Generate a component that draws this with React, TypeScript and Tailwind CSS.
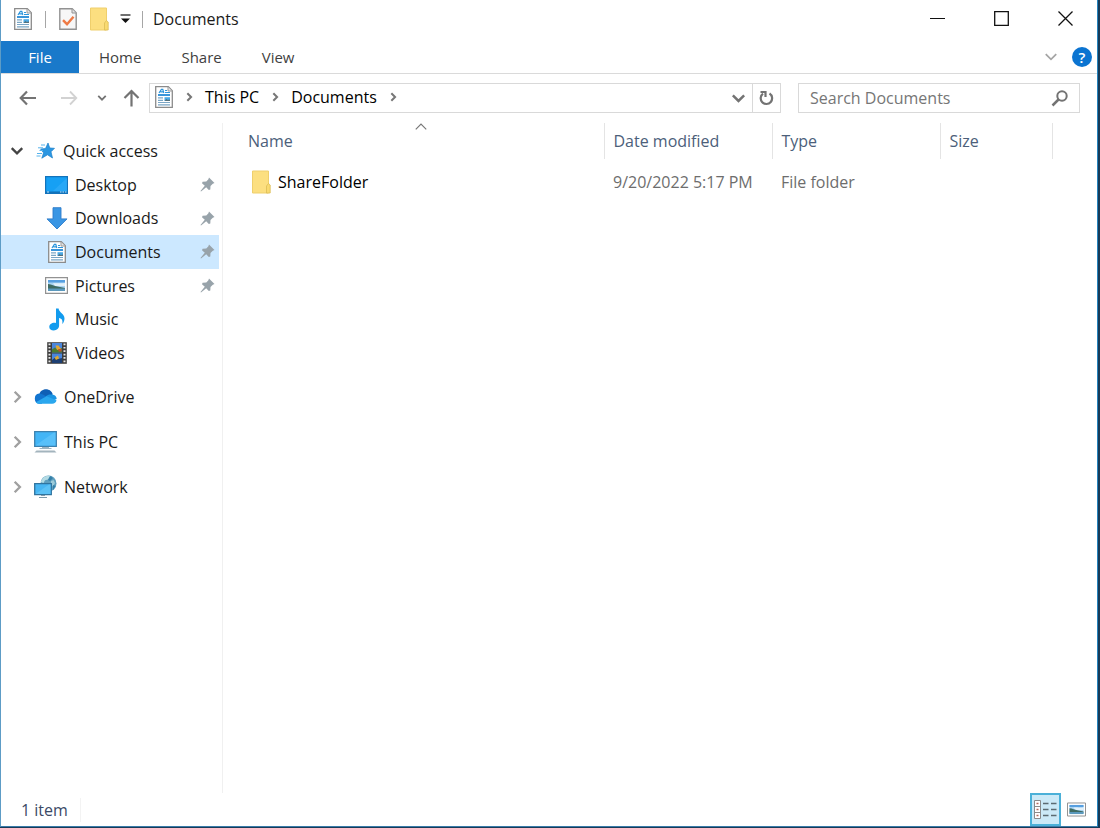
import type { ReactNode } from "react"

function DocumentIcon() {
  return (
    <svg width="18" height="22" viewBox="0 0 18 22" aria-hidden="true">
      <path d="M.7.7h12.6l4 4v16.6H.7z" fill="#fff" stroke="#8b8b8b" strokeWidth="1.3" />
      <path d="M13 1v4h4" fill="#e8e8e8" stroke="#9a9a9a" />
      <path d="M4 7 6.4 3.4h1.4L8.8 7M5.4 5.8h3.2M10 4.5h2M10 6.5h5" fill="none" stroke="#2c95dc" strokeWidth="1.2" />
      <path d="M3 9h12" stroke="#1682d4" strokeWidth="1.7" />
      <path d="M3 11.8h5M3 14.3h5M3 16.5h12M3 18.8h12" stroke="#7aa6c6" strokeWidth="1.2" />
      <path d="M9.5 11.2H15V15H9.5z" fill="#4aa9e4" />
      <path d="m9.5 15 2-2 1.3 1 2.2-.6V15z" fill="#55707b" />
    </svg>
  )
}

function CheckDocIcon() {
  return (
    <svg width="18" height="22" viewBox="0 0 18 22" aria-hidden="true">
      <path d="M.8.8h12.4l4 4v16.4H.8z" fill="#f7f7f7" stroke="#929292" strokeWidth="1.4" />
      <path d="M13 1v4h4" fill="#e4e4e4" stroke="#929292" />
      <path d="m4 12.2 4 4 6.5-7.5" fill="none" stroke="#ee7a45" strokeWidth="2.4" />
    </svg>
  )
}

function FolderIcon() {
  return (
    <svg width="19" height="24" viewBox="0 0 19 24" aria-hidden="true">
      <path d="M.5 1h16v22H.5z" fill="#fcdf80" stroke="#efcf6c" />
      <path d="M14.5 23v-7l2-2.5 1.7 1.5v8z" fill="#f9da70" stroke="#dcbc55" strokeWidth=".8" />
    </svg>
  )
}

function StarIcon() {
  return (
    <svg width="20" height="18" viewBox="0 0 20 18" aria-hidden="true">
      <path d="m12 1 1.8 5 4.700.3-3.500 3.500 1.500 6.200-5-3.200L5.800 16.200l1.800-5.400-3-3.700 4.900-.6z" fill="#2b97e2" stroke="#1c7fc8" strokeWidth=".7" />
      <path d="M5 3h4M2 5.800h5M3.500 8.500H7M1 11.500h5M.5 14h4" stroke="#56b3ec" />
    </svg>
  )
}

function DesktopIcon() {
  return (
    <svg width="23" height="18" viewBox="0 0 23 18" aria-hidden="true">
      <path d="M.6.6h21.800v16.800H.6z" fill="#16a0f4" stroke="#1373bb" strokeWidth="1.2" />
      <path d="M8 15 22 2v13z" fill="#35aef8" opacity=".6" />
      <path d="M1 15.500h21V17H1z" fill="#1272b9" />
      <path d="M2 16h2M15 16h1.500M17.500 16H19M20 16h1.500" stroke="#bfe4fb" strokeWidth="1.2" />
    </svg>
  )
}

function DownloadIcon() {
  return (
    <svg width="22" height="23" viewBox="0 0 22 23" aria-hidden="true">
      <path d="M7 .7h8v11.200h6L11 22 1 11.900h6z" fill="#3a96e4" stroke="#2c7ccb" strokeWidth=".9" />
    </svg>
  )
}

// landscape thumbnail, shared by the sidebar and the large icons toggle
function PictureIcon({ className = "h-[17px] w-[23px]" }: { className?: string }) {
  return (
    <svg className={className} viewBox="0 0 23 17" aria-hidden="true">
      <path d="M.6.6h21.800v15.800H.6z" fill="#fff" stroke="#929292" strokeWidth="1.2" />
      <path d="M3 3h17v11H3z" fill="#a9d3f2" />
      <path d="M3 3h17v2.500H3z" fill="#579fe0" />
      <path d="M8 6.500c3-1 5 .5 12-.5v3H10z" fill="#e3f1fa" />
      <path d="M3 7c4 .2 6 2 9.500 2.500L20 11v1H3z" fill="#3f6b62" />
      <path d="M3 11.500h17V14H3z" fill="#5b99bd" />
    </svg>
  )
}

function MusicIcon() {
  return (
    <svg width="16" height="23" viewBox="0 0 16 23" aria-hidden="true">
      <path d="M7 .5h2.600c.4 4 5.900 5.300 5.900 9.900 0 2.200-.9 4.200-2.200 5.500.7-3.700-.6-5.200-3.200-5.800v7.500c0 2.800-2.300 4.900-5.300 4.900C2 22.500.3 21.200.3 19c0-2.800 3-4.700 6.700-4z" fill="#129bee" />
    </svg>
  )
}

function VideoIcon() {
  return (
    <svg width="20" height="22" viewBox="0 0 20 22" aria-hidden="true">
      <path d="M.5.5h19v21H.5z" fill="#3d3d3d" stroke="#666" />
      <path d="M2.500 1.500v20M17.500 1.500v20" stroke="#e6e6e6" strokeWidth="2" strokeDasharray="1.7 1.7" />
      <path d="M5 1h10v9.500H5zM5 11.500h10V21H5z" fill="#4a86dc" />
      <path d="M5 7.500 8 5.500l2 2L15 6v4.500H5z" fill="#4d7c2d" />
      <path d="M8.500 3.500h3L14 7l-4 1z" fill="#e4a72e" />
      <path d="M11.500 7h3v2.500h-3z" fill="#c94830" />
      <path d="m5 18 4-3 2 2 4-1v5H5z" fill="#1d3f72" />
      <path d="m7.500 15.500 3.500-2 1 3-3 1.500z" fill="#e0a92f" />
    </svg>
  )
}

function CloudIcon() {
  return (
    <svg width="23" height="15" viewBox="0 0 23 15" aria-hidden="true">
      <path d="M5.200 6C5.700 2.500 8.500.3 12 .3c3.300 0 6 2.200 6.700 5.200L12 11z" fill="#0f5fb5" />
      <path d="M5.200 14.700A5.100 5.100 0 0 1 5.200 4.600c2.300 0 3.500.8 7 3l-4.500 7.100z" fill="#1275d0" />
      <path d="M11.500 7.500c1.800-1.700 4-2.300 6.500-2 3.200.3 4.700 2.400 4.700 4.600l-4.700 2z" fill="#1b94e2" />
      <path d="M1.800 13.200 12.500 7.300l10 3.900c-.4 2.100-2 3.500-4.300 3.500h-13c-1.300 0-2.500-.5-3.400-1.500z" fill="#2aa7ee" />
    </svg>
  )
}

function ComputerIcon() {
  return (
    <svg width="23" height="22" viewBox="0 0 23 22" aria-hidden="true">
      <path d="M.7.7h21.600v14.600H.7z" fill="#43b5f6" stroke="#3c81ae" strokeWidth="1.3" />
      <path d="M1.500 14.500 20 1.500h1.500v13z" fill="#68c8fb" opacity=".6" />
      <path d="M8 16.500h7M5.500 17.500h12" stroke="#9db3bf" />
      <path d="M2.500 19.500h18l2 2H.5z" fill="#a3b4bd" />
    </svg>
  )
}

function NetworkIcon() {
  return (
    <svg width="23" height="23" viewBox="0 0 23 23" aria-hidden="true">
      <circle cx="14.5" cy="8.5" r="8" fill="#5f9fbe" />
      <path d="M9 3c2-2 5-2.700 7.500-2L14 4.500l-3 .7L9.500 8l-3-1z" fill="#b3dbe4" />
      <path d="m17 6 2.500-1 1.500 3-2 3.500-2-2z" fill="#9ccbd9" />
      <path d="m16 1 3 2-3 3-2-1zM19 10l2.500 1-2.500 4z" fill="#347fa8" />
      <path d="M.7 8.700h16.600v11H.7z" fill="#47b6f3" stroke="#30749f" strokeWidth="1.3" />
      <path d="M1.500 19 15 9.500h1.500V19z" fill="#6bcaf9" opacity=".6" />
      <path d="M7 20.500h4M5 22.500h8" stroke="#7d99a9" />
    </svg>
  )
}

function PinIcon() {
  return (
    <svg width="15" height="15" viewBox="0 0 15 15" className="text-[#98a3aa]" aria-hidden="true">
      <path d="M9 .5 14.500 6l-1.700.7-2.300 2.200-.2 3.600-1.500.5-2.600-2.800L1 14.500l-.5-.5 4.300-5.200L2 6.200l.6-1.500 3.700-.2 2.100-2.300z" fill="currentColor" />
    </svg>
  )
}

type Direction = "down" | "right" | "up"

const chevronPaths: Record<Direction, string> = {
  down: "M1.5 3.500 6 8l4.500-4.500",
  right: "M4 1.500 8.500 6 4 10.500",
  up: "M1.500 8 6 3.500 10.500 8",
}

function Chevron({ direction, className }: { direction: Direction; className: string }) {
  return (
    <svg viewBox="0 0 12 12" className={className} fill="none" stroke="currentColor" aria-hidden="true">
      <path d={chevronPaths[direction]} />
    </svg>
  )
}

type Item = { name: string; icon: ReactNode; pinned?: boolean; active?: boolean }

const quickAccess: Item[] = [
  { name: "Desktop", icon: <DesktopIcon />, pinned: true },
  { name: "Downloads", icon: <DownloadIcon />, pinned: true },
  { name: "Documents", icon: <DocumentIcon />, pinned: true, active: true },
  { name: "Pictures", icon: <PictureIcon />, pinned: true },
  { name: "Music", icon: <MusicIcon /> },
  { name: "Videos", icon: <VideoIcon /> },
]

const places: Item[] = [
  { name: "OneDrive", icon: <CloudIcon /> },
  { name: "This PC", icon: <ComputerIcon /> },
  { name: "Network", icon: <NetworkIcon /> },
]

function TitleBar() {
  return (
    <header className="flex h-[41px] items-start justify-between">
      <div className="flex h-[38px] items-center gap-[10px] pl-[13px]">
        <div className="flex items-center gap-[13px]">
          <DocumentIcon />
          <span className="h-[17px] w-px bg-[#a6a6a6]" />
          <button type="button" aria-label="Properties">
            <CheckDocIcon />
          </button>
          <button type="button" aria-label="New folder">
            <FolderIcon />
          </button>
        </div>
        <button type="button" aria-label="Customize Quick Access Toolbar" className="px-px">
          <svg width="11" height="10" viewBox="0 0 11 10">
            <path d="M.5 1h10" stroke="#333" strokeWidth="1.4" />
            <path d="M1 4.500h9L5.500 9z" fill="#111" />
          </svg>
        </button>
        <span className="h-[17px] w-px bg-[#a6a6a6]" />
        <h1>Documents</h1>
      </div>
      <div className="flex h-[37px] text-[#111]">
        <button type="button" aria-label="Minimize" className="grid w-16 place-items-center">
          <svg width="15" height="15" viewBox="0 0 15 15" stroke="currentColor">
            <path d="M0 7.500h15" />
          </svg>
        </button>
        <button type="button" aria-label="Maximize" className="grid w-16 place-items-center">
          <svg width="15" height="15" viewBox="0 0 15 15" fill="none" stroke="currentColor" strokeWidth="1.3">
            <path d="M.7.7h13.600v13.600H.7z" />
          </svg>
        </button>
        <button type="button" aria-label="Close" className="grid w-16 place-items-center">
          <svg width="15" height="15" viewBox="0 0 15 15" stroke="currentColor" strokeWidth="1.3">
            <path d="m.5.5 14 14m0-14-14 14" />
          </svg>
        </button>
      </div>
    </header>
  )
}

function Ribbon() {
  return (
    <nav aria-label="Ribbon" className="flex h-[33px] border-b border-[#dadada] text-[15px] text-[#3f3f3f]">
      <button type="button" className="w-[78px] bg-[#1979ca] text-white">
        File
      </button>
      {["Home", "Share", "View"].map((tab) => (
        <button key={tab} type="button" className="px-5">
          {tab}
        </button>
      ))}
      <div className="ml-auto flex items-center gap-[14px] pr-[5px]">
        <button type="button" aria-label="Expand the Ribbon">
          <Chevron direction="down" className="size-[14px] stroke-[1.5] text-[#a5a5a5]" />
        </button>
        <button
          type="button"
          aria-label="Help"
          className="size-5 rounded-full bg-[#0b74d1] text-[15px] leading-5 font-semibold text-white"
        >
          ?
        </button>
      </div>
    </nav>
  )
}

function AddressBar() {
  return (
    <div className="flex items-center pt-[9px] pb-2.5 pr-[17px] pl-[7px] text-[#737373]">
      <button type="button" aria-label="Back" className="grid w-10 place-items-center">
        <svg width="18" height="16" viewBox="0 0 18 16" fill="none" stroke="currentColor" strokeWidth="2.2">
          <path d="M17 8H2m6-6.500L1.700 8 8 14.500" />
        </svg>
      </button>
      <button type="button" aria-label="Forward" className="grid w-[42px] place-items-center text-[#d2d2d2]">
        <svg width="18" height="16" viewBox="0 0 18 16" fill="none" stroke="currentColor" strokeWidth="1.8">
          <path d="M1 8h15m-6-6.500L16.300 8 10 14.500" />
        </svg>
      </button>
      <button type="button" aria-label="Recent locations" className="grid w-6 place-items-center">
        <Chevron direction="down" className="size-[10px] stroke-[2.2]" />
      </button>
      <button type="button" aria-label="Up" className="grid w-[34px] place-items-center">
        <svg width="17" height="18" viewBox="0 0 17 18" fill="none" stroke="currentColor" strokeWidth="2.2">
          <path d="M8.500 17.500V2M1.500 9l7-7 7 7" />
        </svg>
      </button>
      <div className="ml-px flex h-[30px] flex-1 border border-[#d9d9d9]">
        <nav aria-label="Address" className="flex flex-1 items-center gap-[11px] pb-0.5 pl-[5px] text-black">
          <DocumentIcon />
          <Chevron direction="right" className="size-[10px] stroke-[2.4] text-[#777]" />
          <a href="#this-pc">This PC</a>
          <Chevron direction="right" className="size-[10px] stroke-[2.4] text-[#777]" />
          <a href="#documents">Documents</a>
          <Chevron direction="right" className="size-[10px] stroke-[2.4] text-[#777]" />
        </nav>
        <button type="button" aria-label="Previous locations" className="grid w-7 place-items-center">
          <Chevron direction="down" className="size-[15px] stroke-2" />
        </button>
        <button
          type="button"
          aria-label="Refresh"
          className="grid w-7 place-items-center border-l border-[#d9d9d9]"
        >
          <svg width="15" height="16" viewBox="0 0 15 16" fill="none" stroke="currentColor" strokeWidth="2.2">
            <path d="M10.500 3.500A5.700 5.700 0 1 1 4 3.700" />
            <path d="M1.500 2h5v5" />
          </svg>
        </button>
      </div>
      <label className="ml-[17px] flex h-[30px] w-[282px] items-center border border-[#d9d9d9] pr-2.5 pl-[11px]">
        <input
          type="text"
          aria-label="Search Documents"
          placeholder="Search Documents"
          className="min-w-0 flex-1 outline-none placeholder:text-[#767676]"
        />
        <svg width="18" height="17" viewBox="0 0 18 17" fill="none" stroke="currentColor" aria-hidden="true">
          <circle cx="11" cy="6" r="4.700" strokeWidth="2" />
          <path d="m7.500 9.500-6 6" strokeWidth="2.500" />
        </svg>
      </label>
    </div>
  )
}

function Sidebar() {
  return (
    <nav aria-label="Folders" className="w-[222px] shrink-0 border-r border-[#f0f0f0] pt-[11px] pr-[3px]">
      <ul className="grid h-[236px] auto-rows-fr">
        <li className="flex items-center pl-[9px]">
          <button type="button" aria-label="Collapse Quick access">
            <Chevron direction="down" className="size-[14px] stroke-2 text-[#444]" />
          </button>
          <a href="#quick-access" className="ml-3 flex items-center gap-[7px]">
            <StarIcon />
            Quick access
          </a>
        </li>
        {quickAccess.map((item) => (
          <li key={item.name} className={item.active ? "bg-[#cce8ff]" : ""}>
            <a href="#folder" className="flex h-full items-center pr-1 pl-11">
              <span className="grid w-[23px] place-items-center">{item.icon}</span>
              <span className="ml-[7px] flex-1">{item.name}</span>
              {item.pinned && <PinIcon />}
            </a>
          </li>
        ))}
      </ul>
      <ul className="mt-1">
        {places.map((item) => (
          <li key={item.name} className="flex h-[45px] items-center pl-[9px]">
            <button type="button" aria-label={`Expand ${item.name}`}>
              <Chevron direction="right" className="size-[14px] stroke-2 text-[#a0a0a0]" />
            </button>
            <a href="#place" className="ml-[10px] flex items-center gap-[7px]">
              {item.icon}
              {item.name}
            </a>
          </li>
        ))}
      </ul>
    </nav>
  )
}

function FileList() {
  return (
    <main className="min-w-0 flex-1 pl-4">
      <table className="w-full table-fixed text-left">
        <thead className="text-[#4c607a]">
          <tr className="h-9">
            <th className="relative w-[365px] border-r border-[#e4e4e4] pl-[9px] font-normal">
              Name
              <Chevron direction="up" className="absolute top-[-3px] left-1/2 size-[14px] -translate-x-1/2 text-[#777]" />
            </th>
            <th className="w-[168px] border-r border-[#e4e4e4] pl-[9px] font-normal">Date modified</th>
            <th className="w-[168px] border-r border-[#e4e4e4] pl-[9px] font-normal">Type</th>
            <th className="w-[112px] border-r border-[#e4e4e4] pl-[9px] font-normal">Size</th>
            <td />
          </tr>
        </thead>
        <tbody className="text-[#6d6d6d]">
          <tr className="h-[46px]">
            <td className="pl-[13px] text-black">
              <a href="#share-folder" className="flex items-center gap-[7px]">
                <FolderIcon />
                ShareFolder
              </a>
            </td>
            <td className="pl-[9px]">9/20/2022 5:17 PM</td>
            <td className="pl-[9px]">File folder</td>
            <td />
            <td />
          </tr>
        </tbody>
      </table>
    </main>
  )
}

function StatusBar() {
  return (
    <footer className="flex h-[33px] items-center justify-between pr-[11px] pl-5 text-[#3c4a66]">
      <span className="border-r border-[#f3f3f3] pr-3">1 item</span>
      <div className="flex h-full items-center gap-[6px]">
        <button
          type="button"
          aria-label="Details"
          className="grid h-full w-[31px] place-items-center border-2 border-[#4bb0d8] bg-[#cbe9f7]"
        >
          <svg width="23" height="19" viewBox="0 0 23 19" fill="none">
            <path d="M.5.5h6v18h-6zM.5 6.500h6M.5 12.500h6" fill="#fff" stroke="#8a8a8a" />
            <path d="M2.500 3.500h2M2.500 9.500h2M2.500 15.500h2" stroke="#b3685b" strokeWidth="1.500" />
            <path d="M9 3.500h5.500M17 3.500h5.500M9 9.500h5.500M17 9.500h5.500M9 15.500h5.500M17 15.500h5.500" stroke="#5c6b72" strokeWidth="1.3" />
          </svg>
        </button>
        <button type="button" aria-label="Large icons">
          <PictureIcon className="h-[15px] w-[19px]" />
        </button>
      </div>
    </footer>
  )
}

export default function App() {
  return (
    <div className="flex min-h-screen bg-[#163a58] pr-0.5 pb-px font-['Open_Sans',sans-serif] text-[16px] leading-6 text-[#1a1a1a]">
      <div className="flex flex-1 flex-col border-x border-b border-l-[#5d9cc6] border-r-[#2583bd] border-b-[#3b7ba8] bg-white">
        <TitleBar />
        <Ribbon />
        <AddressBar />
        <div className="flex flex-1">
          <Sidebar />
          <FileList />
        </div>
        <StatusBar />
      </div>
    </div>
  )
}
